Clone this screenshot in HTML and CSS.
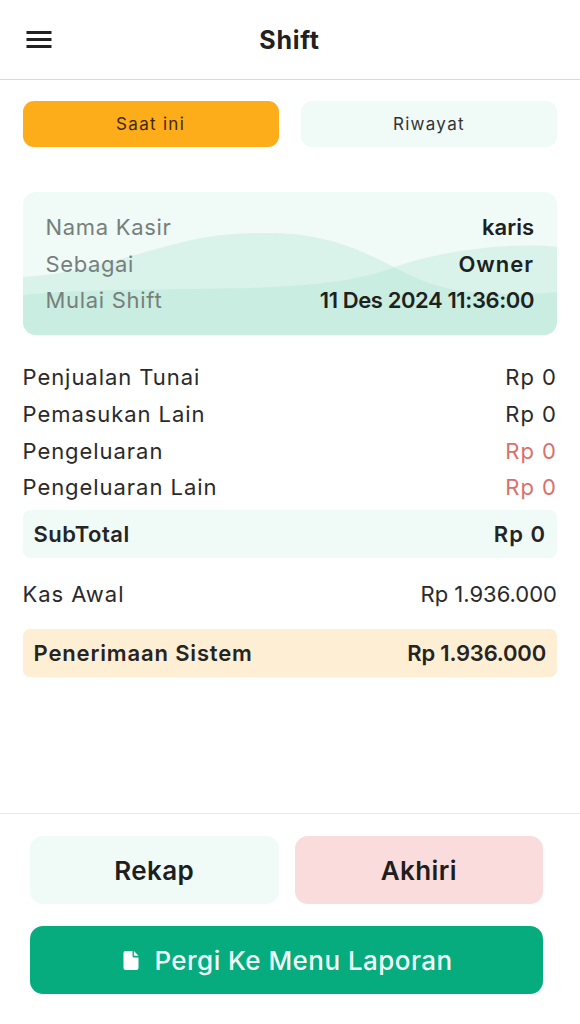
FILE: index.html
```html
<!DOCTYPE html>
<html lang="id">
<head>
<meta charset="utf-8">
<title>Shift</title>
<link rel="stylesheet" href="styles.css">
</head>
<body>
<div class="app">
  <header class="topbar">
    <svg class="menu" viewBox="0 0 26 19" width="26" height="19"><path d="M0.500 2.500h25M0.500 9.500h25M0.500 16.500h25" stroke="#212121" stroke-width="2.800" fill="none"/></svg>
    <h1 class="title">Shift</h1>
  </header>
  <main class="content">
    <div class="tabs">
      <div class="tab tab-active">Saat ini</div>
      <div class="tab">Riwayat</div>
    </div>
    <section class="card">
      <svg class="waves" viewBox="0 0 535 143" preserveAspectRatio="none">
        <path d="M0 85C60 82 110 62 160 50C190 43 215 41 245 41C310 41 345 62 385 82C410 94 430 99 460 101C490 103 515 102 535 100V143H0Z" fill="#a4e0cd" opacity=".3"/>
        <path d="M0 103C70 96 160 98 230 96C300 93 340 88 372 75C420 58 490 50 535 55V143H0Z" fill="#a4e0cd" opacity=".3"/>
      </svg>
      <div class="card-row"><span class="card-label">Nama Kasir</span><span class="card-value">karis</span></div>
      <div class="card-row"><span class="card-label card-label-short">Sebagai</span><span class="card-value card-value-wide">Owner</span></div>
      <div class="card-row"><span class="card-label">Mulai Shift</span><span class="card-value card-value-tight">11 Des 2024 11:36:00</span></div>
    </section>
    <div class="list">
      <div class="row"><span class="label">Penjualan Tunai</span><span class="amount">Rp 0</span></div>
      <div class="row"><span class="label">Pemasukan Lain</span><span class="amount">Rp 0</span></div>
      <div class="row"><span class="label">Pengeluaran</span><span class="amount neg">Rp 0</span></div>
      <div class="row"><span class="label">Pengeluaran Lain</span><span class="amount neg">Rp 0</span></div>
    </div>
    <div class="total total-green"><span class="total-label-short">SubTotal</span><span class="total-amount-wide">Rp 0</span></div>
    <div class="row row-kas"><span class="label">Kas Awal</span><span>Rp 1.936.000</span></div>
    <div class="total total-cream"><span class="total-label">Penerimaan Sistem</span><span class="total-amount-tight">Rp 1.936.000</span></div>
  </main>
  <footer class="footer">
    <div class="actions">
      <button class="btn btn-mint">Rekap</button>
      <button class="btn btn-pink">Akhiri</button>
    </div>
    <button class="btn btn-green">
      <svg class="doc" viewBox="0 0 15 19" width="16" height="19"><path d="M2 0h7v5a1.400 1.400 0 0 0 1.400 1.400H15V17a2 2 0 0 1-2 2H2a2 2 0 0 1-2-2V2a2 2 0 0 1 2-2ZM10.400 0 15 4.800h-4.600Z" fill="#fff"/></svg>
      <span class="btn-green-text">Pergi Ke Menu Laporan</span>
    </button>
  </footer>
</div>
</body>
</html>
```
FILE: styles.css
```css
* { box-sizing: border-box; }
html, body { margin: 0; padding: 0; background: #fff; }
body { font-family: Inter, "Liberation Sans", sans-serif; color: #212121; }
.app { width: 580px; height: 1024px; display: flex; flex-direction: column; }
.topbar { height: 80px; flex: none; display: grid; grid-template-columns: 1fr auto 1fr; align-items: center; padding: 0 27px 0 26px; border-bottom: 1.500px solid #d9d9d9; }
.menu { display: block; grid-column: 1; }
.title { margin: 0; font-size: 25px; font-weight: 700; letter-spacing: .7px; color: #212121; grid-column: 2; }
.content { flex: 1; padding: 21px 23px 0 22.500px; }
.tabs { display: flex; gap: 22px; }
.tab { flex: 1; height: 46px; border-radius: 11px; background: #f0faf7; display: flex; align-items: center; justify-content: center; font-size: 17px; letter-spacing: 1.300px; color: #333; }
.tab-active { background: #fdac1a; color: #3d2a10; }
.card { position: relative; overflow: hidden; margin-top: 45px; height: 143px; padding: 17px 23px 0; border-radius: 13px; background: #f0faf7; }
.waves { position: absolute; left: 0; top: 0; width: 100%; height: 100%; }
.card-row { position: relative; height: 36.500px; display: flex; align-items: center; justify-content: space-between; font-size: 22px; }
.card-label { color: #777f7c; letter-spacing: .7px; }
.card-label-short { letter-spacing: .6px; }
.card-value { font-weight: 600; color: #1d2120; }
.card-value-wide { letter-spacing: 1px; }
.card-value-tight { letter-spacing: -.4px; }
.list { margin-top: 24px; }
.row { height: 36.700px; display: flex; align-items: center; justify-content: space-between; font-size: 22px; color: #2a2a2a; }
.label { letter-spacing: .95px; }
.amount { letter-spacing: 1px; }
.neg { color: #d9706c; }
.total { height: 48px; border-radius: 7px; padding: 0 11px; display: flex; align-items: center; justify-content: space-between; font-size: 22px; font-weight: 600; color: #242424; }
.total-label { letter-spacing: .85px; }
.total-label-short { letter-spacing: .5px; }
.total-amount-wide { letter-spacing: 1px; }
.total-amount-tight { letter-spacing: -.2px; }
.total-green { margin-top: 4px; background: #f0faf7; }
.total-cream { margin-top: 17px; background: #feeed3; }
.row-kas { margin-top: 18px; height: 36px; }
.footer { flex: none; height: 211px; border-top: 1.500px solid #e8e8e8; padding: 22px 37px 0 30px; display: flex; flex-direction: column; gap: 22px; }
.actions { display: flex; gap: 16px; }
.btn { border: 0; height: 68px; border-radius: 13px; font-family: inherit; font-size: 26px; font-weight: 600; letter-spacing: .4px; color: #1e1e1e; display: flex; align-items: center; justify-content: center; padding: 0; }
.actions .btn { flex: 1; }
.btn-mint { background: #f0faf7; }
.btn-pink { background: #fadcdc; }
.btn-green { background: #06ab7e; color: #f2fbf8; gap: 15px; width: 100%; font-weight: 500; padding-left: 3px; }
.btn-green-text { letter-spacing: .45px; }
```
